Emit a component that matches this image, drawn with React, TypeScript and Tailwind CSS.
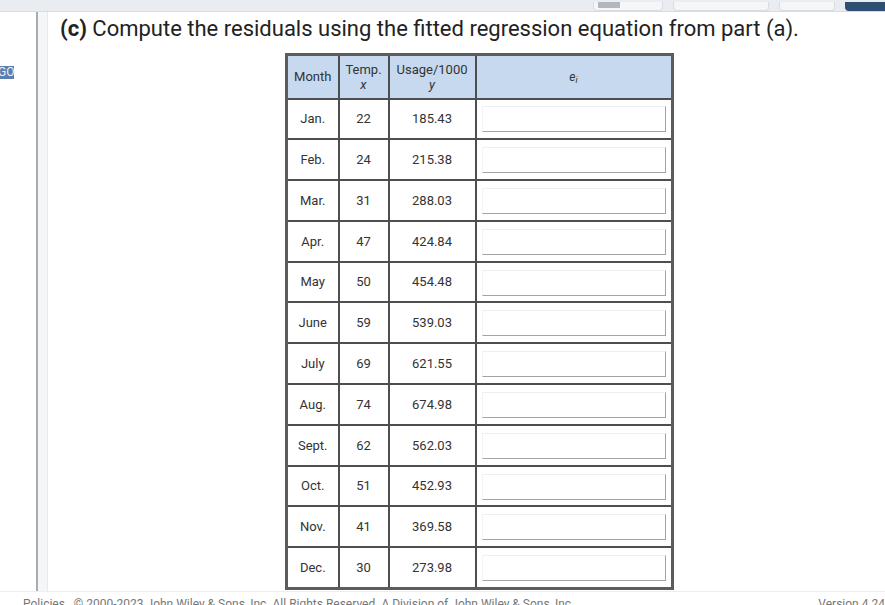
import React from 'react'

const rows = [
  ['Jan.', '22', '185.43'],
  ['Feb.', '24', '215.38'],
  ['Mar.', '31', '288.03'],
  ['Apr.', '47', '424.84'],
  ['May', '50', '454.48'],
  ['June', '59', '539.03'],
  ['July', '69', '621.55'],
  ['Aug.', '74', '674.98'],
  ['Sept.', '62', '562.03'],
  ['Oct.', '51', '452.93'],
  ['Nov.', '41', '369.58'],
  ['Dec.', '30', '273.98'],
]

export default function App() {
  return (
    <div className="w-[885px] h-[605px] overflow-hidden bg-white text-[#222] font-['Roboto',sans-serif]">
      {/* top toolbar, cut off */}
      <div className="h-[12px] bg-[#e9ecf0] border-b border-[#d6dbe1] flex items-end justify-end gap-[10px]">
        <div className="w-[70px] h-[9px] rounded-b-[4px] bg-[#f4f6f8] border border-t-0 border-[#d9dde2] flex">
          <div className="w-[22px] h-[6px] bg-[#b4b8bd] ml-[4px]" />
        </div>
        <div className="w-[96px] h-[9px] rounded-b-[4px] bg-[#f4f6f8] border border-t-0 border-[#d9dde2]" />
        <div className="w-[56px] h-[9px] rounded-b-[4px] bg-[#f4f6f8] border border-t-0 border-[#d9dde2]" />
        <div className="w-[40px] h-[9px] rounded-bl-[4px] bg-[#2e4f72]" />
      </div>

      <div className="flex h-[579px]">
        {/* left panel */}
        <div className="w-[38px] shrink-0 bg-white border-r-[2px] border-[#a9adb2] pt-[47px]">
          <span className="inline-block bg-[#5b7fae] text-[#e8eef7] text-[12px] leading-[13px] -ml-[2px]">GO</span>
        </div>
        <div className="w-[10px] shrink-0 bg-[#f4f6f9] border-r border-[#e6e9ee]" />

        {/* main */}
        <div className="flex-1 pl-[12px]">
          <h2 className="text-[22px] leading-[26px] mt-[4px]">
            <b>(c)</b> Compute the residuals using the fitted regression equation from part (a).
          </h2>

          <table className="mt-[11px] ml-[225px] border-collapse border-[3px] border-[#5a5c5e] text-[13px] text-[#333]">
            <thead>
              <tr className="h-[44px] bg-[#c6d9ee]">
                <th className="w-[52px] border-2 border-[#4c4e50] font-normal">Month</th>
                <th className="w-[50px] border-2 border-[#4c4e50] font-normal leading-[15px]">
                  Temp.
                  <br />
                  <i>x</i>
                </th>
                <th className="w-[87px] border-2 border-[#4c4e50] font-normal leading-[15px]">
                  Usage/1000
                  <br />
                  <i>y</i>
                </th>
                <th className="w-[194px] border-2 border-[#4c4e50] font-normal">
                  <i className="text-[12px]">
                    e<sub className="text-[9px]">i</sub>
                  </i>
                </th>
              </tr>
            </thead>
            <tbody>
              {rows.map(([m, x, y]) => (
                <tr key={m} className="h-[40.8px]">
                  <td className="border-2 border-[#4c4e50] text-center">{m}</td>
                  <td className="border-2 border-[#4c4e50] text-center">{x}</td>
                  <td className="border-2 border-[#4c4e50] text-center">{y}</td>
                  <td className="border-2 border-[#4c4e50] px-[5px]">
                    <div className="h-[26px] w-[184px] border border-t-[#efefef] border-l-[#f3f3f3] border-b-[#a3a3a3] border-r-[#a3a3a3] mt-[1px]" />
                  </td>
                </tr>
              ))}
            </tbody>
          </table>
        </div>
      </div>

      {/* footer, cut off */}
      <div className="border-t border-[#eceef1] h-[14px] flex justify-between text-[12px] text-[#777] pl-[23px] pt-[5px] leading-[14px] whitespace-nowrap">
        <span>Policies&nbsp;&nbsp;&nbsp;© 2000-2023 John Wiley &amp; Sons, Inc. All Rights Reserved. A Division of John Wiley &amp; Sons, Inc.</span>
        <span className="-mr-[10px]">Version 4.24.1</span>
      </div>
    </div>
  )
}
